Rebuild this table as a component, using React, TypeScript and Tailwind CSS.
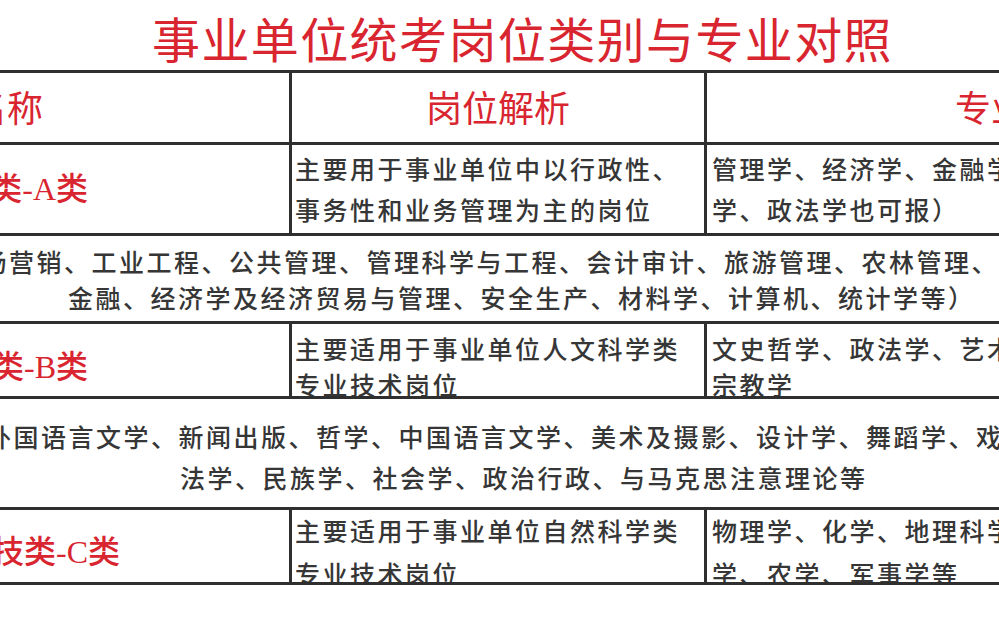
const RED = "text-[#d8252f]";

function Label({ text, pr, pt }: { text: string; pr: string; pt: string }) {
  return (
    <div
      className={`w-[432px] shrink-0 border-r-[3px] border-[#2f2f2f] overflow-hidden flex justify-end whitespace-nowrap text-[32px] leading-[40px] tracking-normal ${RED} ${pr} ${pt}`}
    >
      {text}
    </div>
  );
}

function Lines({ lines, className }: { lines: string[]; className: string }) {
  return (
    <div className={`overflow-hidden whitespace-nowrap ${className}`}>
      {lines.map((l) => (
        <div key={l}>{l}</div>
      ))}
    </div>
  );
}

export default function App() {
  return (
    <div className="w-[999px] h-[625px] overflow-hidden bg-white text-[#363636] font-['Liberation_Serif','Noto_Sans_CJK_SC',serif]">
      {/* Title */}
      <h1
        className={`h-[70px] flex items-center justify-center pl-[46px] pt-[4px] text-[48px] tracking-[1.4px] ${RED} font-['Noto_Sans_CJK_SC',sans-serif]`}
      >
        事业单位统考岗位类别与专业对照
      </h1>

      {/* Table, wider than the view on both sides */}
      <div className="-ml-[140px] w-[1440px] border-t-[3px] border-[#2f2f2f] text-[25px] tracking-[2.5px] font-medium">
        {/* Header */}
        <div className="flex h-[72px] border-b-[3px] border-[#2f2f2f] tracking-normal font-normal">
          <div className={`w-[432px] shrink-0 border-r-[3px] border-[#2f2f2f] flex items-center justify-end pr-[246px] pt-[5px] text-[36px] ${RED}`}>
            岗位名称
          </div>
          <div className={`w-[415px] shrink-0 border-r-[3px] border-[#2f2f2f] flex items-center justify-center pt-[5px] text-[36px] ${RED}`}>
            岗位解析
          </div>
          <div className={`flex-1 flex items-center pl-[248px] pt-[5px] text-[36px] ${RED}`}>
            专业要求
          </div>
        </div>

        {/* A */}
        <div className="flex h-[91px] border-b-[3px] border-[#2f2f2f] overflow-hidden">
          <Label text="综合管理类-A类" pr="pr-[201px]" pt="items-center" />
          <Lines
            className="w-[415px] shrink-0 border-r-[3px] border-[#2f2f2f] pl-[3px] pt-[5px] leading-[41px]"
            lines={["主要用于事业单位中以行政性、", "事务性和业务管理为主的岗位"]}
          />
          <Lines
            className="flex-1 pl-[5px] pt-[5px] leading-[41px]"
            lines={["管理学、经济学、金融学、统计学", "学、政法学也可报）"]}
          />
        </div>

        {/* A majors */}
        <div className="h-[88px] border-b-[3px] border-[#2f2f2f] overflow-hidden whitespace-nowrap pt-[10px] leading-[36px]">
          <div className="pl-[94px]">市场营销、工业工程、公共管理、管理科学与工程、会计审计、旅游管理、农林管理、</div>
          <div className="pl-[208px]">金融、经济学及经济贸易与管理、安全生产、材料学、计算机、统计学等）</div>
        </div>

        {/* B */}
        <div className="flex h-[75px] border-b-[3px] border-[#2f2f2f] overflow-hidden">
          <Label text="社会科学专技类-B类" pr="pr-[201px]" pt="pt-[23px]" />
          <Lines
            className="w-[415px] shrink-0 border-r-[3px] border-[#2f2f2f] pl-[3px] pt-[9px] leading-[36px]"
            lines={["主要适用于事业单位人文科学类", "专业技术岗位"]}
          />
          <Lines
            className="flex-1 pl-[5px] pt-[9px] leading-[36px]"
            lines={["文史哲学、政法学、艺术学、教育学", "宗教学"]}
          />
        </div>

        {/* B majors */}
        <div className="h-[111px] border-b-[3px] border-[#2f2f2f] overflow-hidden whitespace-nowrap pt-[19px] leading-[41px]">
          <div className="pl-[126px]">外国语言文学、新闻出版、哲学、中国语言文学、美术及摄影、设计学、舞蹈学、戏剧</div>
          <div className="pl-[320px]">法学、民族学、社会学、政治行政、与马克思注意理论等</div>
        </div>

        {/* C */}
        <div className="flex h-[75px] border-b-[3px] border-[#2f2f2f] overflow-hidden">
          <Label text="自然科学专技类-C类" pr="pr-[169px]" pt="pt-[22px]" />
          <Lines
            className="w-[415px] shrink-0 border-r-[3px] border-[#2f2f2f] pl-[3px] pt-[1px] leading-[43px]"
            lines={["主要适用于事业单位自然科学类", "专业技术岗位"]}
          />
          <Lines
            className="flex-1 pl-[5px] pt-[1px] leading-[43px]"
            lines={["物理学、化学、地理科学、生物科", "学、农学、军事学等"]}
          />
        </div>
      </div>
    </div>
  );
}
